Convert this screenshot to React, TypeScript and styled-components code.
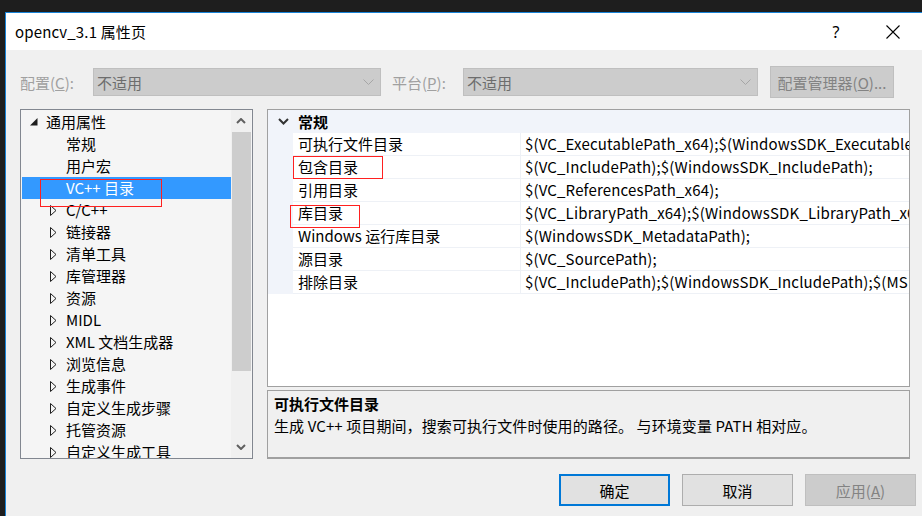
import React from "react";
import styled, { createGlobalStyle } from "styled-components";

const GlobalStyle = createGlobalStyle`
  html, body {
    margin: 0;
    padding: 0;
    background: #1e1e1e;
    overflow: hidden;
  }
  body {
    font-family: "Noto Sans CJK SC", "Noto Sans", sans-serif;
    font-size: 15px;
    color: #000;
  }
`;

const Desktop = styled.div`
  height: 516px;
  padding: 12px 0 0 5px;
  box-sizing: border-box;
`;

const Dialog = styled.div`
  height: 504px;
  background: #f0f0f0;
  border-top: 1px solid #1883d7;
  border-left: 1px solid #1883d7;
  box-sizing: border-box;
  display: flex;
  flex-direction: column;
`;

const TitleBar = styled.div`
  height: 37px;
  background: #fff;
  display: flex;
  align-items: center;
  padding-left: 9px;
`;

const Title = styled.span`
  font-size: 15px;
  line-height: 37px;
  letter-spacing: 0.15px;
  flex: 1;
`;

const CaptionButton = styled.div<{ w: number }>`
  width: ${(p) => p.w}px;
  height: 37px;
  display: flex;
  align-items: center;
  justify-content: center;
  font-family: "Noto Sans", sans-serif;
  font-size: 16px;
`;

const Toolbar = styled.div`
  display: flex;
  align-items: center;
  height: 32px;
  margin-top: 16px;
  padding-left: 14px;
`;

const ToolLabel = styled.span<{ w: number }>`
  width: ${(p) => p.w}px;
  color: #a0a0a0;
  font-size: 15px;
  flex-shrink: 0;
`;

const Combo = styled.div<{ w: number; gap?: number }>`
  width: ${(p) => p.w}px;
  margin-right: ${(p) => p.gap ?? 0}px;
  height: 28px;
  box-sizing: border-box;
  background: #cccccc;
  border: 1px solid #bfbfbf;
  display: flex;
  align-items: center;
  padding: 0 6px 0 3px;
  color: #6d6d6d;
  font-size: 15px;
  flex-shrink: 0;

  span {
    flex: 1;
  }
`;

const DisabledButton = styled.div<{ w: number }>`
  width: ${(p) => p.w}px;
  height: 32px;
  box-sizing: border-box;
  background: #cccccc;
  border: 1px solid #bfbfbf;
  color: #838383;
  display: flex;
  align-items: center;
  justify-content: center;
  font-size: 15px;
  flex-shrink: 0;
`;

const Main = styled.div`
  display: flex;
  margin-top: 11px;
  padding-left: 14px;
  height: 350px;
  gap: 14px;
`;

const Tree = styled.div`
  width: 233px;
  height: 350px;
  box-sizing: border-box;
  border: 1px solid #828790;
  background: #f5f5f5;
  display: flex;
`;

const TreeList = styled.div`
  position: relative;
  flex: 1;
  padding: 1px 0 0 1px;
  overflow: hidden;
`;

const TreeRow = styled.div<{ selected?: boolean }>`
  position: relative;
  height: 22px;
  line-height: 22px;
  display: flex;
  align-items: center;
  background: ${(p) => (p.selected ? "#3399ff" : "transparent")};
  color: ${(p) => (p.selected ? "#fff" : "#000")};
  white-space: nowrap;
  font-size: 15px;
`;

const Twisty = styled.span<{ x: number }>`
  width: ${(p) => p.x}px;
  flex-shrink: 0;
  display: flex;
  justify-content: flex-end;
`;

const TreeLabel = styled.span<{ indent: number }>`
  margin-left: ${(p) => p.indent}px;
`;

// red outline drawn on top of a label
const Mark = styled.div<{ left: number; top: number; w: number; h: number }>`
  position: absolute;
  z-index: 2;
  left: ${(p) => p.left}px;
  top: ${(p) => p.top}px;
  width: ${(p) => p.w}px;
  height: ${(p) => p.h}px;
  border: 1px solid #ff2020;
  box-sizing: border-box;
  pointer-events: none;
`;

const ScrollBar = styled.div`
  width: 20px;
  margin-right: 1px;
  background: #f0f0f0;
  display: flex;
  flex-direction: column;
  align-items: stretch;
`;

const ScrollArrow = styled.div`
  height: 22px;
  display: flex;
  align-items: center;
  justify-content: center;
`;

const ScrollTrack = styled.div`
  flex: 1;
  display: flex;
  flex-direction: column;
`;

const ScrollThumb = styled.div`
  height: 239px;
  margin-left: 1px;
  background: #cdcdcd;
`;

const RightColumn = styled.div`
  width: 643px;
  display: flex;
  flex-direction: column;
  gap: 3px;
`;

const Grid = styled.div`
  height: 278px;
  box-sizing: border-box;
  border: 1px solid #a0a0a0;
  background: #fff;
  overflow: hidden;
`;

const GroupRow = styled.div`
  height: 23px;
  display: flex;
  align-items: center;
  background: #f1f4fa;
  font-weight: 700;
  font-size: 15px;
`;

const GroupToggle = styled.span`
  width: 30px;
  display: flex;
  justify-content: center;
  flex-shrink: 0;
`;

const PropRow = styled.div`
  height: 23px;
  display: flex;
  font-size: 15px;
  line-height: 22px;
`;

const Gutter = styled.div`
  width: 25px;
  background: #f1f4fa;
  flex-shrink: 0;
`;

const NameCell = styled.div`
  position: relative;
  width: 228px;
  box-sizing: border-box;
  padding-left: 5px;
  border-right: 1px solid #eef1f6;
  border-bottom: 1px solid #eef1f6;
  white-space: nowrap;
  flex-shrink: 0;
`;

const ValueCell = styled.div`
  flex: 1;
  padding-left: 4px;
  border-bottom: 1px solid #eef1f6;
  white-space: nowrap;
  overflow: hidden;
  letter-spacing: 0.16px;
`;

const Description = styled.div`
  height: 69px;
  box-sizing: border-box;
  border: 1px solid #a0a0a0;
  border-bottom-width: 2px;
  background: #f0f0f0;
  padding: 2px 6px;
  font-size: 15px;
`;

const DescTitle = styled.div`
  font-weight: 700;
  line-height: 22px;
`;

const DescText = styled.div`
  line-height: 22px;
  letter-spacing: 0.1px;
`;

const Footer = styled.div`
  display: flex;
  justify-content: flex-end;
  gap: 12px;
  margin-top: 15px;
  padding-right: 6px;
`;

const DialogButton = styled.div<{ variant?: "default" | "disabled" }>`
  width: 111px;
  height: 32px;
  box-sizing: border-box;
  display: flex;
  align-items: center;
  justify-content: center;
  font-size: 15px;
  background: ${(p) => (p.variant === "disabled" ? "#cccccc" : "#e1e1e1")};
  color: ${(p) => (p.variant === "disabled" ? "#838383" : "#000")};
  border: ${(p) =>
    p.variant === "default"
      ? "2px solid #0078d7"
      : p.variant === "disabled"
      ? "1px solid #bfbfbf"
      : "1px solid #adadad"};
`;

const ComboArrow = () => (
  <svg width="11" height="7" viewBox="0 0 11 7">
    <path d="M0.5 0.5 L5.5 5.5 L10.5 0.5" fill="none" stroke="#a6a6a6" strokeWidth="1" />
  </svg>
);

const Expanded = () => (
  <svg width="8" height="8" viewBox="0 0 8 8">
    <path d="M7.5 0 L7.5 7.5 L0 7.5 Z" fill="#1e1e1e" />
  </svg>
);

const Collapsed = () => (
  <svg width="7" height="11" viewBox="0 0 7 11">
    <path d="M0.5 0.5 L6 5.5 L0.5 10.5 Z" fill="none" stroke="#1e1e1e" strokeWidth="1" />
  </svg>
);

const Chevron = ({ up }: { up?: boolean }) => (
  <svg width="10" height="6" viewBox="0 0 10 6">
    <path
      d={up ? "M1 5 L5 1 L9 5" : "M1 1 L5 5 L9 1"}
      fill="none"
      stroke="#606060"
      strokeWidth="2"
    />
  </svg>
);

const treeItems: { label: string; level: 0 | 1; kind: "open" | "closed" | "leaf"; selected?: boolean }[] = [
  { label: "通用属性", level: 0, kind: "open" },
  { label: "常规", level: 1, kind: "leaf" },
  { label: "用户宏", level: 1, kind: "leaf" },
  { label: "VC++ 目录", level: 1, kind: "leaf", selected: true },
  { label: "C/C++", level: 1, kind: "closed" },
  { label: "链接器", level: 1, kind: "closed" },
  { label: "清单工具", level: 1, kind: "closed" },
  { label: "库管理器", level: 1, kind: "closed" },
  { label: "资源", level: 1, kind: "closed" },
  { label: "MIDL", level: 1, kind: "closed" },
  { label: "XML 文档生成器", level: 1, kind: "closed" },
  { label: "浏览信息", level: 1, kind: "closed" },
  { label: "生成事件", level: 1, kind: "closed" },
  { label: "自定义生成步骤", level: 1, kind: "closed" },
  { label: "托管资源", level: 1, kind: "closed" },
  { label: "自定义生成工具", level: 1, kind: "closed" },
];

const props: { name: string; value: string; mark?: { left: number; top: number; w: number; h: number } }[] = [
  { name: "可执行文件目录", value: "$(VC_ExecutablePath_x64);$(WindowsSDK_ExecutablePath);$(VS_ExecutablePath);$(MSBuild_ExecutablePath)" },
  { name: "包含目录", value: "$(VC_IncludePath);$(WindowsSDK_IncludePath);", mark: { left: 0, top: 0, w: 90, h: 23 } },
  { name: "引用目录", value: "$(VC_ReferencesPath_x64);" },
  { name: "库目录", value: "$(VC_LibraryPath_x64);$(WindowsSDK_LibraryPath_x64);$(NETFXKitsDir)Lib\\um\\x64", mark: { left: -3, top: 3, w: 70, h: 23 } },
  { name: "Windows 运行库目录", value: "$(WindowsSDK_MetadataPath);" },
  { name: "源目录", value: "$(VC_SourcePath);" },
  { name: "排除目录", value: "$(VC_IncludePath);$(WindowsSDK_IncludePath);$(MSBuild_ExecutablePath);$(VC_LibraryPath_x64)" },
];

export default function App() {
  return (
    <>
      <GlobalStyle />
      <Desktop>
        <Dialog>
          <TitleBar>
            <Title>opencv_3.1 属性页</Title>
            <CaptionButton w={46}>?</CaptionButton>
            <CaptionButton w={11} />
            <CaptionButton w={46}>
              <svg width="14" height="14" viewBox="0 0 14 14">
                <path d="M0.5 0.5 L13.5 13.5 M13.5 0.5 L0.5 13.5" stroke="#000" strokeWidth="1.1" />
              </svg>
            </CaptionButton>
            <CaptionButton w={6} />
          </TitleBar>

          <Toolbar>
            <ToolLabel w={73}>
              配置(<u>C</u>):
            </ToolLabel>
            <Combo w={288} gap={11}>
              <span>不适用</span>
              <ComboArrow />
            </Combo>
            <ToolLabel w={71}>
              平台(<u>P</u>):
            </ToolLabel>
            <Combo w={295} gap={12}>
              <span>不适用</span>
              <ComboArrow />
            </Combo>
            <DisabledButton w={124}>
              配置管理器(<u>O</u>)...
            </DisabledButton>
          </Toolbar>

          <Main>
            <Tree>
              <TreeList>
                {treeItems.map((item) => (
                  <TreeRow key={item.label} selected={item.selected}>
                    <Twisty x={item.level === 0 ? 16 : 35}>
                      {item.kind === "open" && <Expanded />}
                      {item.kind === "closed" && <Collapsed />}
                    </Twisty>
                    <TreeLabel indent={item.level === 0 ? 8 : 9}>{item.label}</TreeLabel>
                    {item.selected && <Mark left={18} top={2} w={122} h={28} />}
                  </TreeRow>
                ))}
              </TreeList>
              <ScrollBar>
                <ScrollArrow>
                  <Chevron up />
                </ScrollArrow>
                <ScrollTrack>
                  <ScrollThumb />
                </ScrollTrack>
                <ScrollArrow>
                  <Chevron />
                </ScrollArrow>
              </ScrollBar>
            </Tree>

            <RightColumn>
              <Grid>
                <GroupRow>
                  <GroupToggle>
                    <svg width="11" height="7" viewBox="0 0 11 7">
                      <path d="M1 1 L5.5 5.5 L10 1" fill="none" stroke="#333" strokeWidth="2" />
                    </svg>
                  </GroupToggle>
                  常规
                </GroupRow>
                {props.map((p) => (
                  <PropRow key={p.name}>
                    <Gutter />
                    <NameCell>
                      {p.name}
                      {p.mark && <Mark {...p.mark} />}
                    </NameCell>
                    <ValueCell>{p.value}</ValueCell>
                  </PropRow>
                ))}
              </Grid>
              <Description>
                <DescTitle>可执行文件目录</DescTitle>
                <DescText>生成 VC++ 项目期间，搜索可执行文件时使用的路径。 与环境变量 PATH 相对应。</DescText>
              </Description>
            </RightColumn>
          </Main>

          <Footer>
            <DialogButton variant="default">确定</DialogButton>
            <DialogButton>取消</DialogButton>
            <DialogButton variant="disabled">
              应用(<u>A</u>)
            </DialogButton>
          </Footer>
        </Dialog>
      </Desktop>
    </>
  );
}
